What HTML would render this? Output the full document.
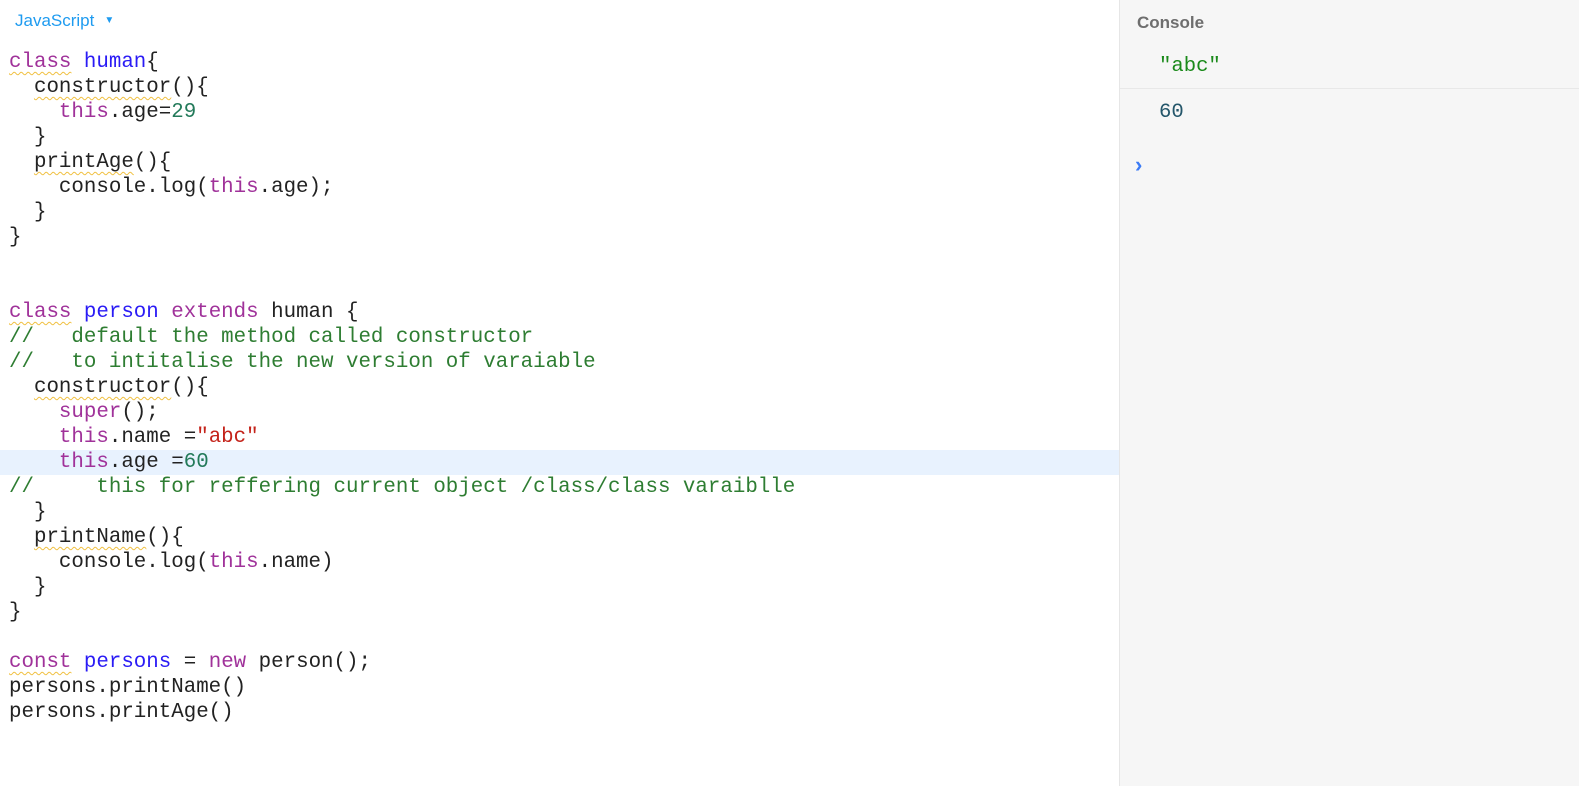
<!DOCTYPE html>
<html><head><meta charset="utf-8"><style>
html,body{margin:0;padding:0;width:1579px;height:786px;overflow:hidden;background:#fff;font-family:"Liberation Sans",sans-serif}
.ed{position:absolute;left:0;top:0;width:1119px;height:786px;background:#fff}
.lang{position:absolute;left:15px;top:11px;font-size:17px;color:#1e9bf0}
.lang span{font-size:10px;margin-left:10px;vertical-align:3px}
.code{position:absolute;left:0;top:50px;width:1119px;font-family:"Liberation Mono",monospace;font-size:20.8px;line-height:25px;color:#222}
.code div{padding-left:9px;height:25px;white-space:pre}
.hl{background:#e8f2fe}
.k{color:#a0329a}.d{color:#2a1bf5}.n{color:#237a5a}.s{color:#c4231a}.c{color:#2e7d32}
.w{text-decoration:underline wavy #f0c040;text-decoration-thickness:1px;text-underline-offset:4px}
.con{position:absolute;left:1119px;top:0;width:460px;height:786px;background:#f6f6f6;border-left:1px solid #e6e6e6}
.ct{position:absolute;left:17px;top:13px;font-weight:bold;font-size:17px;color:#6e6e6e}
.row{position:absolute;left:0;width:460px;font-family:"Liberation Mono",monospace;font-size:20.6px}
.pr{position:absolute;left:15px;top:152px;color:#3b7bf5;font-size:22px;font-weight:bold}
</style></head><body>
<div class="ed">
<div class="lang">JavaScript<span>▼</span></div>
<div class="code"><div><span class="k w">class</span> <span class="d">human</span>{</div><div>  <span class="w">constructor</span>(){</div><div>    <span class="k">this</span>.age=<span class="n">29</span></div><div>  }</div><div>  <span class="w">printAge</span>(){</div><div>    console.log(<span class="k">this</span>.age);</div><div>  }</div><div>}</div><div></div><div></div><div><span class="k w">class</span> <span class="d">person</span> <span class="k">extends</span> human {</div><div class="c">//   default the method called constructor</div><div class="c">//   to intitalise the new version of varaiable</div><div>  <span class="w">constructor</span>(){</div><div>    <span class="k">super</span>();</div><div>    <span class="k">this</span>.name =<span class="s">"abc"</span></div><div class="hl">    <span class="k">this</span>.age =<span class="n">60</span></div><div class="c">//     this for reffering current object /class/class varaiblle</div><div>  }</div><div>  <span class="w">printName</span>(){</div><div>    console.log(<span class="k">this</span>.name)</div><div>  }</div><div>}</div><div></div><div><span class="k w">const</span> <span class="d">persons</span> = <span class="k">new</span> person();</div><div>persons.printName()</div><div>persons.printAge()</div></div>
</div>
<div class="con">
<div class="ct">Console</div>
<div class="row" style="top:55px;height:33px;border-bottom:1px solid #e8e8e8"><span style="position:absolute;left:39px;top:0;color:#1a8a1a">"abc"</span></div>
<div class="row" style="top:101px"><span style="position:absolute;left:39px;top:0;color:#24566a">60</span></div>
<div class="pr">›</div>
</div>
</body></html>
